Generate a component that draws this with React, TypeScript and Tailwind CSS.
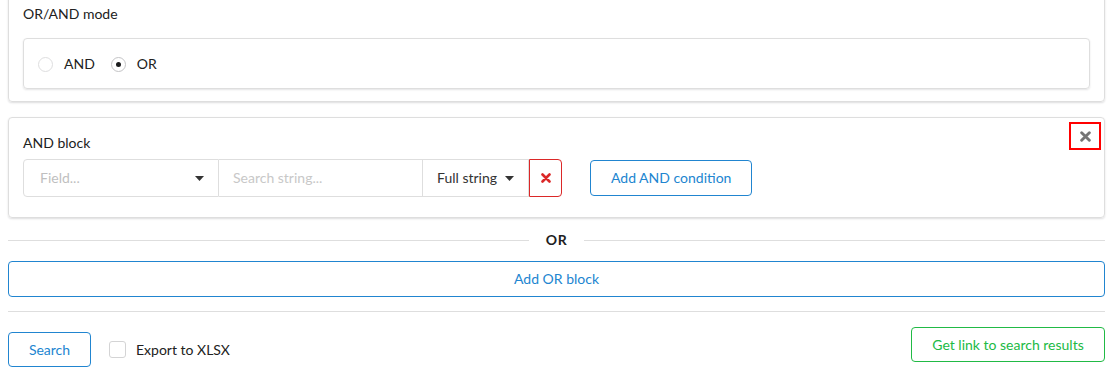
import React from "react";

const Caret: React.FC<{ className?: string }> = ({ className }) => (
  <svg width="9" height="5" viewBox="0 0 9 5" className={className}>
    <path d="M0 0h9L4.5 5z" fill="currentColor" />
  </svg>
);

const Times: React.FC<{ className?: string; size?: number }> = ({ className, size = 11 }) => (
  <svg width={size} height={size} viewBox="0 0 10 10" className={className}>
    <path d="M1.5 1.5l7 7M8.5 1.5l-7 7" stroke="currentColor" strokeWidth="2.6" strokeLinecap="round" />
  </svg>
);

const Radio: React.FC<{ checked?: boolean; label: string }> = ({ checked, label }) => (
  <label className="flex items-center gap-[11px] mr-[16px]">
    <span
      className={
        "w-[15px] h-[15px] rounded-full border bg-white flex items-center justify-center " +
        (checked ? "border-[#c4c4c6]" : "border-[#dededf]")
      }
    >
      {checked && <span className="w-[5px] h-[5px] rounded-full bg-[#1b1c1d]" />}
    </span>
    <span>{label}</span>
  </label>
);

export default function App() {
  return (
    <div
      className="px-[8px] text-[14px] leading-[20px] text-[#212121] bg-white min-h-[375px] overflow-hidden"
      style={{ fontFamily: "Lato, 'Noto Sans', sans-serif" }}
    >
      {/* OR/AND mode */}
      <div className="-mt-[11px] border border-[#dedede] rounded-[4px] shadow-[0_1px_2px_0_rgba(34,36,38,0.15)] px-[14px] pt-[14px] pb-[12px]">
        <div className="mb-[14px]">OR/AND mode</div>
        <div className="border border-[#dedede] rounded-[4px] shadow-[0_1px_2px_0_rgba(34,36,38,0.12)] px-[14px] pt-[15px] pb-[14px] flex items-center">
          <Radio label="AND" />
          <Radio label="OR" checked />
        </div>
      </div>

      {/* AND block */}
      <div className="relative mt-[15px] border border-[#dedede] rounded-[4px] shadow-[0_1px_2px_0_rgba(34,36,38,0.15)] px-[14px] pt-[15px] pb-[20px]">
        <button className="absolute right-[3px] top-[4px] w-[32px] h-[28px] border-2 border-[#ff0000] flex items-center justify-center text-[#767676]">
          <Times size={11} />
        </button>
        <div className="mb-[6px]">AND block</div>
        <div className="flex items-center">
          <div className="flex h-[38px]">
            <div className="w-[196px] border border-[#dedede] rounded-l-[4px] flex items-center justify-between pl-[16px] pr-[14px] text-[#bfbfbf]">
              <span>Field...</span>
              <Caret className="text-[#333]" />
            </div>
            <div className="w-[204px] border-y border-r border-[#dedede] flex items-center pl-[14px] text-[#c8c8c8]">
              Search string...
            </div>
            <div className="w-[106px] border-y border-r border-[#dedede] flex items-center pl-[14px] gap-[8px] text-[#333]">
              <span>Full string</span>
              <Caret className="text-[#333]" />
            </div>
            <button className="w-[33px] border border-[#db2828] rounded-r-[4px] flex items-center justify-center text-[#db2828]">
              <Times size={10} />
            </button>
          </div>
          <button className="ml-[28px] h-[36px] px-[20px] border border-[#2185d0] rounded-[4px] text-[#2185d0]">
            Add AND condition
          </button>
        </div>
      </div>

      {/* OR divider */}
      <div className="flex items-center mt-[12px] h-[20px]">
        <div className="flex-1 border-t border-[#dedede]" />
        <span className="px-[17px] font-bold text-[14px] tracking-[0.5px]">OR</span>
        <div className="flex-1 border-t border-[#dedede]" />
      </div>

      <button className="mt-[11px] w-full h-[36px] border border-[#2185d0] rounded-[4px] text-[#2185d0]">
        Add OR block
      </button>

      <div className="mt-[14px] border-t border-[#dedede]" />

      {/* footer */}
      <div className="flex items-start justify-between mt-[15px]">
        <div className="flex items-center mt-[5px]">
          <button className="w-[83px] h-[35px] border border-[#2185d0] rounded-[4px] text-[#2185d0]">
            Search
          </button>
          <label className="flex items-center ml-[18px] gap-[10px]">
            <span className="w-[17px] h-[17px] border border-[#d4d4d5] rounded-[3px] bg-white" />
            <span>Export to XLSX</span>
          </label>
        </div>
        <button className="w-[194px] h-[35px] border border-[#21ba45] rounded-[4px] text-[#21ba45]">
          Get link to search results
        </button>
      </div>
    </div>
  );
}
